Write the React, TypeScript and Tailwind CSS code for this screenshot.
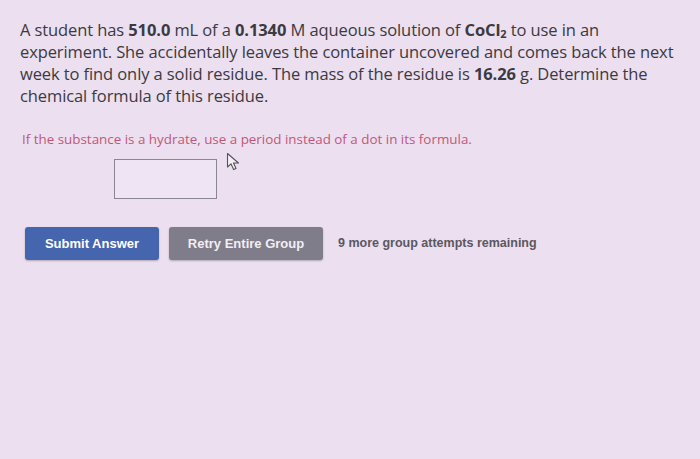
import React from "react";

export default function App() {
  return (
    <div className="w-[700px] h-[459px] bg-[#ebdff0] overflow-hidden" style={{ fontFamily: '"Open Sans", sans-serif' }}>
      <div className="pl-[20px] pr-[10px] pt-[19px]">
        <p className="text-[16.5px] leading-[22px] text-[#3c3a40] tracking-[-0.1px]">
          A student has <b className="font-bold">510.0</b> mL of a <b className="font-bold">0.1340</b> M aqueous solution of{" "}
          <b className="font-bold">
            CoCl<span className="text-[11px] leading-[10px] inline-block relative top-[2px]">2</span>
          </b>{" "}
          to use in an
          <br />
          experiment. She accidentally leaves the container uncovered and comes back the next
          <br />
          week to find only a solid residue. The mass of the residue is <b className="font-bold">16.26</b> g. Determine the
          <br />
          chemical formula of this residue.
        </p>
        <p className="mt-[23px] ml-[2px] text-[13.4px] leading-[18px] text-[#c1587a]">
          If the substance is a hydrate, use a period instead of a dot in its formula.
        </p>
        <div className="mt-[11px] ml-[94px] flex items-start">
          <div className="w-[103px] h-[40px] border border-[#8a8790] bg-[#efe4f3]"></div>
          <svg className="ml-[9px] -mt-[7px]" width="16" height="20" viewBox="0 0 16 20">
            <path d="M1.5 1.5 L1.5 15 L5 11.8 L7.6 17.6 L10 16.5 L7.5 11 L12.5 11 Z" fill="#f4eef6" stroke="#55525a" strokeWidth="1.1" strokeLinejoin="round" />
          </svg>
        </div>
        <div className="mt-[28px] ml-[5px] flex items-center" style={{ fontFamily: '"Liberation Sans", Arial, sans-serif' }}>
          <button className="w-[134px] h-[33px] rounded-[3px] bg-[#4565af] text-white text-[13px] font-bold shadow-[0_1px_2px_rgba(0,0,0,0.25)]">
            Submit Answer
          </button>
          <button className="ml-[10px] w-[154px] h-[33px] rounded-[3px] bg-[#7f7d89] text-[#f2eef4] text-[13px] font-bold shadow-[0_1px_2px_rgba(0,0,0,0.25)]">
            Retry Entire Group
          </button>
          <span className="ml-[15px] text-[12.5px] font-bold text-[#5b5860]">9 more group attempts remaining</span>
        </div>
      </div>
    </div>
  );
}
